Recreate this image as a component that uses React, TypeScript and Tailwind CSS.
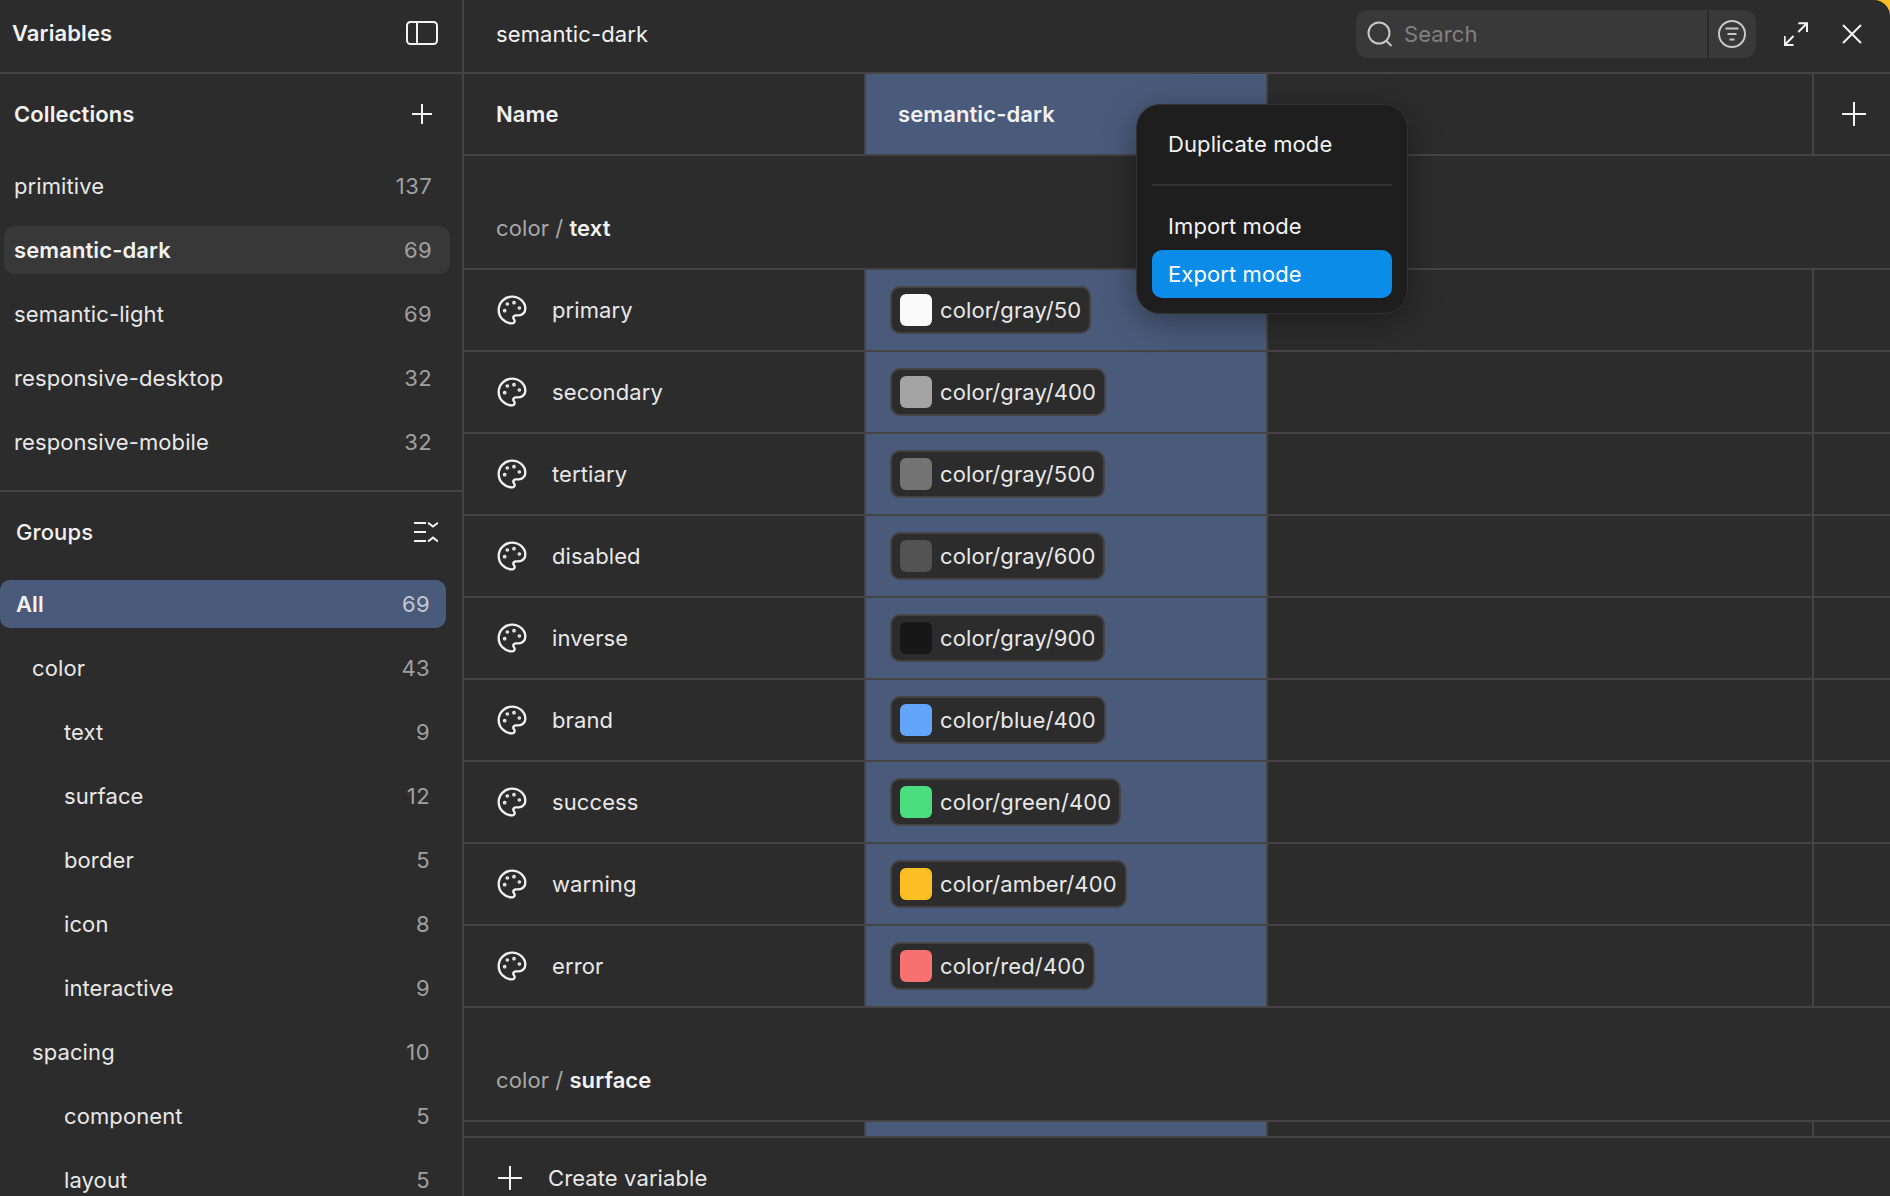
import { Palette } from "lucide-react";

const collections = [
  { n: "primitive", c: "137" },
  { n: "semantic-dark", c: "69", active: true },
  { n: "semantic-light", c: "69" },
  { n: "responsive-desktop", c: "32" },
  { n: "responsive-mobile", c: "32" },
];

const groups = [
  { n: "color", c: "43", pad: "pl-[32px]" },
  { n: "text", c: "9", pad: "pl-[64px]" },
  { n: "surface", c: "12", pad: "pl-[64px]" },
  { n: "border", c: "5", pad: "pl-[64px]" },
  { n: "icon", c: "8", pad: "pl-[64px]" },
  { n: "interactive", c: "9", pad: "pl-[64px]" },
  { n: "spacing", c: "10", pad: "pl-[32px]" },
  { n: "component", c: "5", pad: "pl-[64px]" },
  { n: "layout", c: "5", pad: "pl-[64px]" },
];

const rows = [
  { n: "primary", v: "color/gray/50", s: "bg-[#fafafa]" },
  { n: "secondary", v: "color/gray/400", s: "bg-[#a3a3a3]" },
  { n: "tertiary", v: "color/gray/500", s: "bg-[#737373]" },
  { n: "disabled", v: "color/gray/600", s: "bg-[#525252]" },
  { n: "inverse", v: "color/gray/900", s: "bg-[#171717]" },
  { n: "brand", v: "color/blue/400", s: "bg-[#60a5fa]" },
  { n: "success", v: "color/green/400", s: "bg-[#4ade80]" },
  { n: "warning", v: "color/amber/400", s: "bg-[#fbbf24]" },
  { n: "error", v: "color/red/400", s: "bg-[#f87171]" },
];

function Plus({ size = 20 }: { size?: number }) {
  return (
    <svg width={size} height={size} viewBox="0 0 20 20" fill="none" stroke="#f2f2f2" strokeWidth={40 / size}>
      <path d="M10 0V20M0 10H20" />
    </svg>
  );
}

function GroupRow({ a, b }: { a: string; b: string }) {
  return (
    <div className="h-[114px] shrink-0 border-b-2 border-[#444444] flex items-center pl-[32px] pt-[32px]">
      <span className="text-[#a8a8a8]">{a} / </span>
      <span className="text-[#f2f2f2] font-semibold ml-[6px]">{b}</span>
    </div>
  );
}

function VarRow({ n, v, s }: { n: string; v: string; s: string }) {
  return (
    <div className="h-[82px] shrink-0 border-b-2 border-[#444444] flex">
      <div className="w-[400px] shrink-0 flex items-center pl-[32px] gap-[24px] text-[#e8e8e8]">
        <Palette size={32} strokeWidth={1.75} color="#f2f2f2" />
        <span>{n}</span>
      </div>
      <div className="w-[404px] shrink-0 border-x-2 border-[#444444] bg-[#4a5a7a] flex items-center pl-[24px]">
        <div className="h-[48px] flex items-center gap-[8px] px-[8px] rounded-[10px] border-2 border-[#444444] bg-[#2c2c2c] text-[#e8e8e8]">
          <div className={`w-[32px] h-[32px] rounded-[6px] ${s}`} />
          <span>{v}</span>
        </div>
      </div>
      <div className="flex-1" />
      <div className="w-[78px] shrink-0 border-l-2 border-[#444444]" />
    </div>
  );
}

export default function App() {
  return (
    <div className="w-[1890px] h-[1196px] bg-[#fbbf24] overflow-hidden">
      <div
        className="w-full h-full bg-[#2c2c2c] rounded-tr-[16px] flex overflow-hidden text-[22px] leading-[28px] tracking-[0.1px] text-[#e8e8e8]"
        style={{ fontFamily: "Inter, 'Liberation Sans', sans-serif" }}
      >
        {/* Sidebar */}
        <aside className="w-[464px] shrink-0 border-r-2 border-[#444444] flex flex-col overflow-hidden">
          <div className="h-[74px] shrink-0 border-b-2 border-[#444444] flex items-center justify-between pl-[12px] pr-[24px] pb-[6px]">
            <span className="font-semibold text-[#f2f2f2]">Variables</span>
            <svg width="32" height="24" viewBox="0 0 32 24" fill="none" stroke="#f2f2f2" strokeWidth={2}>
              <rect x="1" y="1" width="30" height="22" rx="3.5" />
              <path d="M11 1V23" />
            </svg>
          </div>

          <div className="h-[80px] shrink-0 flex items-center justify-between pl-[14px] pr-[30px]">
            <span className="font-semibold text-[#f2f2f2]">Collections</span>
            <Plus />
          </div>
          <div className="mt-[8px] flex flex-col gap-[16px] pl-[4px] pb-[24px] border-b-2 border-[#444444]">
            {collections.map((c) => (
              <div
                key={c.n}
                className={`w-[446px] h-[48px] flex items-center justify-between pl-[10px] pr-[18px] rounded-[10px] ${c.active ? "bg-[#383838]" : ""}`}
              >
                <span className={c.active ? "font-semibold text-[#f2f2f2]" : ""}>{c.n}</span>
                <span className="text-[#a0a0a0] tracking-[0.4px]">{c.c}</span>
              </div>
            ))}
          </div>

          <div className="h-[80px] shrink-0 flex items-center justify-between pl-[16px] pr-[24px]">
            <span className="font-medium text-[#f2f2f2]">Groups</span>
            <svg width="24" height="20" viewBox="0 0 24 20" fill="none" stroke="#f2f2f2" strokeWidth={2}>
              <path d="M0 1H12M0 10H12M0 19H12" />
              <path d="M14 0.8L19 4.6L24 0.8M14 19.5L19 15.6L24 19.5" />
            </svg>
          </div>
          <div className="mt-[8px] flex flex-col gap-[16px] shrink-0">
            <div className="w-[446px] h-[48px] shrink-0 flex items-center justify-between pl-[16px] pr-[16px] rounded-[10px] bg-[#4a5a7a]">
              <span className="font-semibold text-[#f2f2f2]">All</span>
              <span className="text-[#c4c8d0] tracking-[0.4px]">69</span>
            </div>
            {groups.map((g) => (
              <div key={g.n} className={`w-[446px] h-[48px] shrink-0 flex items-center justify-between pr-[16px] ${g.pad}`}>
                <span>{g.n}</span>
                <span className="text-[#a0a0a0] tracking-[0.4px]">{g.c}</span>
              </div>
            ))}
          </div>
        </aside>

        {/* Main */}
        <main className="relative flex-1 min-w-0 flex flex-col">
          <div className="h-[74px] shrink-0 border-b-2 border-[#444444] flex items-center pl-[32px] pb-[4px]">
            <span className="text-[#f2f2f2]">semantic-dark</span>
            <div className="ml-auto w-[400px] h-[48px] rounded-[12px] bg-[#393939] flex overflow-hidden">
              <div className="flex-1 flex items-center pl-[11px] gap-[11px] text-[#808080]">
                <svg width="26" height="26" viewBox="0 0 26 26" fill="none" stroke="#c8c8c8" strokeWidth={2} className="shrink-0">
                  <circle cx="12" cy="12" r="10.5" />
                  <path d="M19.5 20L24.5 25" />
                </svg>
                <span>Search</span>
              </div>
              <div className="w-[49px] shrink-0 border-l-2 border-[#2c2c2c] flex items-center justify-center">
                <svg width="28" height="28" viewBox="0 0 28 28" fill="none" stroke="#c8c8c8" strokeWidth={2} className="-translate-x-px">
                  <circle cx="14" cy="14" r="13" />
                  <path d="M7.5 8.5H20.5M9.5 14H18.5M11.5 19.5H16.5" />
                </svg>
              </div>
            </div>
            <svg width="24" height="24" viewBox="0 0 24 24" fill="none" stroke="#f2f2f2" strokeWidth={2} className="ml-[28px]">
              <path d="M14.3 1.3H23V10M23 1.3L14.3 10M0.7 14V23H9.5M0.7 23L9.5 14" />
            </svg>
            <svg width="20" height="20" viewBox="0 0 20 20" fill="none" stroke="#f2f2f2" strokeWidth={2} className="ml-[34px] mr-[28px]">
              <path d="M1 1L19 19M19 1L1 19" />
            </svg>
          </div>

          <div className="flex-1 min-h-0 overflow-hidden flex flex-col">
            <div className="h-[82px] shrink-0 border-b-2 border-[#444444] flex">
              <div className="w-[400px] shrink-0 flex items-center pl-[32px] font-semibold text-[#f2f2f2]">Name</div>
              <div className="w-[404px] shrink-0 border-x-2 border-[#444444] bg-[#4a5a7a] flex items-center pl-[32px] font-semibold text-[#f2f2f2]">
                semantic-dark
              </div>
              <div className="flex-1" />
              <div className="w-[78px] shrink-0 border-l-2 border-[#444444] flex items-center justify-center">
                <span className="ml-[4px]">
                  <Plus size={24} />
                </span>
              </div>
            </div>
            <GroupRow a="color" b="text" />
            {rows.map((r) => (
              <VarRow key={r.n} {...r} />
            ))}
            <GroupRow a="color" b="surface" />
            <VarRow n="" v="" s="" />
          </div>

          <div className="h-[60px] shrink-0 border-t-2 border-[#444444] bg-[#2c2c2c] flex items-center pl-[34px] pt-[22px] gap-[26px] text-[#e8e8e8]">
            <Plus size={24} />
            <span>Create variable</span>
          </div>

          {/* Mode menu */}
          <div className="absolute left-[672px] top-[104px] w-[272px] h-[210px] rounded-[24px] bg-[#1e1e1e] border border-[#333333] shadow-[0_8px_32px_rgba(0,0,0,0.35)] px-[15px] pt-[15px] text-[#f2f2f2]">
            <div className="h-[48px] flex items-center px-[16px]">Duplicate mode</div>
            <div className="mt-[16px] h-[2px] bg-[#333333]" />
            <div className="mt-[16px] h-[48px] flex items-center px-[16px]">Import mode</div>
            <div className="h-[48px] flex items-center px-[16px] rounded-[10px] bg-[#0c8ce9] text-white">Export mode</div>
          </div>
        </main>
      </div>
    </div>
  );
}
